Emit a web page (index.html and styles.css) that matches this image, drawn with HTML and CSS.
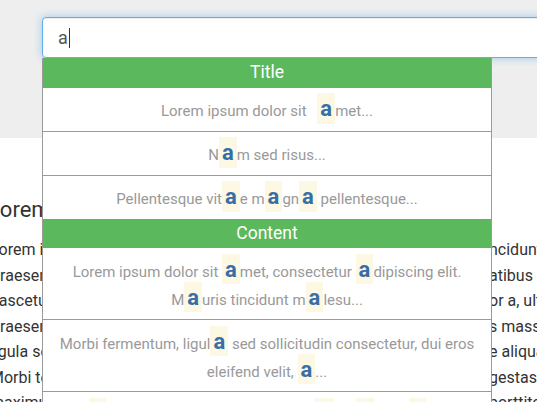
FILE: index.html
```html
<!DOCTYPE html>
<html lang="en">
<head>
<meta charset="utf-8">
<title>Autocomplete</title>
<link rel="stylesheet" href="styles.css">
</head>
<body>
<div class="hero">
  <div class="search">
    <div class="field"><span class="typed">a</span><span class="caret"></span></div>
    <div class="dropdown">
      <div class="group">Title</div>
      <div class="item">Lorem ipsum dolor sit&ensp;&thinsp;<mark class="hl">a</mark>met...</div>
      <div class="item">N<mark class="hl">a</mark>m sed risus...</div>
      <div class="item last">Pellentesque vit<mark class="hl">a</mark>e m<mark class="hl">a</mark>gn<mark class="hl">a</mark> pellentesque...</div>
      <div class="group">Content</div>
      <div class="item">Lorem ipsum dolor sit <mark class="hl">a</mark>met, consectetur <mark class="hl">a</mark>dipiscing elit.<br>M<mark class="hl">a</mark>uris tincidunt m<mark class="hl">a</mark>lesu...</div>
      <div class="item">Morbi fermentum, ligul<mark class="hl">a</mark> sed sollicitudin consectetur, dui eros<br>eleifend velit, <mark class="hl">a</mark>...</div>
      <div class="item">Sed <mark class="hl">a</mark>c tellus est vitae nisi vulputate l<mark class="hl">a</mark>cini<mark class="hl">a</mark> quis <mark class="hl">a</mark>nte vel, et pretium tellus...</div>
    </div>
  </div>
</div>
<div class="content">
  <h2 class="heading">Lorem ipsum</h2>
  <div class="para">
    <div class="line"><span class="l">Lorem ipsum dolor sit amet, consectetur adipiscing elit. Nunc ti</span><span class="r">ncidunt nisi id</span></div>
    <div class="line"><span class="l">Praesent lacinia, cum sociis natoque pen</span><span class="r">atibus et magnis</span></div>
    <div class="line"><span class="l">nascetur ridiculus mus. Integer tort</span><span class="r">or a, ultrices</span></div>
    <div class="line"><span class="l">Praesent vitae dui quis</span><span class="r">s massa vel</span></div>
    <div class="line"><span class="l">ligula sed erat vitae</span><span class="r">e aliquam</span></div>
    <div class="line"><span class="l">Morbi tempus nisi e</span><span class="r">gestas nec</span></div>
    <div class="line"><span class="l">maximus vel</span><span class="r">porttitor</span></div>
  </div>
</div>
</body>
</html>
```
FILE: styles.css
```css
html, body {
  margin: 0;
  padding: 0;
}
body {
  overflow: hidden;
  background: #fff;
  font-family: Roboto, "Noto Sans", "Liberation Sans", sans-serif;
  color: #333;
}
.hero {
  background: #eee;
  height: 138px;
  box-sizing: border-box;
  padding: 17px 0 0 42px;
}
.search {
  position: relative;
  width: 520px;
}
.field {
  height: 41px;
  box-sizing: border-box;
  border: 1px solid #66afe9;
  border-radius: 4px;
  background: #fff;
  box-shadow: inset 0 1px 1px rgba(0, 0, 0, .075), 0 0 8px rgba(102, 175, 233, .6);
  padding-left: 15px;
  display: flex;
  align-items: center;
  font-size: 18px;
  color: #555;
}
.caret {
  width: 1px;
  height: 20px;
  background: #333;
  margin-left: 1px;
}
.dropdown {
  position: absolute;
  top: 41px;
  left: 0;
  width: 450px;
  box-sizing: border-box;
  border-left: 1px solid #9a9a9a;
  border-right: 1px solid #9a9a9a;
  background: #fff;
  z-index: 2;
}
.group {
  background: #5cb85c;
  color: #fff;
  text-align: center;
  font-size: 17.5px;
  height: 29.5px;
  line-height: 29.5px;
}
.item {
  padding: 7.5px 15px;
  font-size: 15px;
  line-height: 20px;
  color: #999;
  text-align: center;
  border-bottom: 1px solid #9a9a9a;
}
.item.last {
  border-bottom: 0;
}
.hl {
  background: #fcf8e3;
  color: #386ea6;
  font-weight: 700;
  font-size: 22px;
  line-height: 28px;
  padding: 2.6px 3px;
}
.content {
  padding-top: 59px;
  margin-left: -10px;
}
.heading {
  margin: 0 0 14px -2px;
  font-size: 22px;
  line-height: 26px;
  font-weight: 400;
  color: #333;
}
.para {
  font-size: 16px;
  line-height: 25.5px;
  color: #333;
}
.line {
  display: flex;
  white-space: nowrap;
}
.l {
  flex: none;
  width: 499px;
  overflow: hidden;
}
.r {
  flex: none;
}
```
